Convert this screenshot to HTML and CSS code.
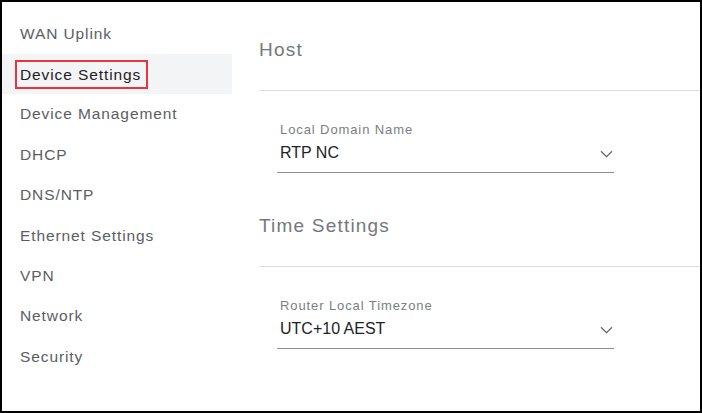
FILE: index.html
```html
<!DOCTYPE html>
<html lang="en">
<head>
<meta charset="utf-8">
<title>Device Settings</title>
<link rel="stylesheet" href="styles.css">
</head>
<body>
<div class="frame">
  <nav class="sidebar">
    <div class="nav-item">WAN Uplink</div>
    <div class="nav-item active"><span class="outline">Device Settings</span></div>
    <div class="nav-item">Device Management</div>
    <div class="nav-item">DHCP</div>
    <div class="nav-item">DNS/NTP</div>
    <div class="nav-item">Ethernet Settings</div>
    <div class="nav-item">VPN</div>
    <div class="nav-item">Network</div>
    <div class="nav-item">Security</div>
  </nav>
  <main class="content">
    <section class="section">
      <h2 class="section-title">Host</h2>
      <div class="divider"></div>
      <div class="field">
        <div class="field-label">Local Domain Name</div>
        <div class="select">
          <span class="select-value">RTP NC</span>
          <svg class="chevron" width="13" height="8" viewBox="0 0 13 8"><path d="M1 1.2 L6.5 6.6 L12 1.2" fill="none" stroke="#5f6368" stroke-width="1.2"/></svg>
        </div>
      </div>
    </section>
    <section class="section">
      <h2 class="section-title">Time Settings</h2>
      <div class="divider"></div>
      <div class="field">
        <div class="field-label">Router Local Timezone</div>
        <div class="select">
          <span class="select-value">UTC+10 AEST</span>
          <svg class="chevron" width="13" height="8" viewBox="0 0 13 8"><path d="M1 1.2 L6.5 6.6 L12 1.2" fill="none" stroke="#5f6368" stroke-width="1.2"/></svg>
        </div>
      </div>
    </section>
  </main>
</div>
</body>
</html>
```

FILE: styles.css
```css
html, body {
  margin: 0;
  padding: 0;
  background: #ffffff;
}
body {
  font-family: "Liberation Sans", Arial, sans-serif;
}
.frame {
  box-sizing: border-box;
  width: 702px;
  height: 413px;
  border: 2px solid #000000;
  display: flex;
  overflow: hidden;
  background: #ffffff;
}
.sidebar {
  width: 230px;
  flex: 0 0 230px;
  padding-top: 11.5px;
  display: flex;
  flex-direction: column;
}
.nav-item {
  height: 40.4px;
  display: flex;
  align-items: center;
  padding-left: 18px;
  font-size: 15.5px;
  letter-spacing: 0.9px;
  color: #5a5e63;
}
.nav-item.active {
  background: #f3f4f6;
  color: #1e2124;
  padding-left: 13px;
}
.outline {
  display: inline-block;
  border: 2px solid #e8343f;
  padding: 2px 5px 2px 3px;
  line-height: 21px;
}
.content {
  flex: 1;
  padding-top: 36px;
  padding-left: 27px;
}
.section {
  display: flex;
  flex-direction: column;
}
.section + .section {
  margin-top: 41px;
}
.section-title {
  margin: 0;
  font-size: 19px;
  line-height: 24px;
  font-weight: normal;
  letter-spacing: 1.2px;
  color: #74787d;
}
.divider {
  height: 1px;
  background: #dedfe0;
  margin-top: 28px;
}
.field {
  margin-top: 31px;
  margin-left: 18px;
  width: 337px;
}
.field-label {
  padding-left: 3px;
  font-size: 13px;
  line-height: 16px;
  letter-spacing: 0.9px;
  color: #7a7e83;
}
.select {
  margin-top: 5px;
  padding: 0 1px 9px 3px;
  border-bottom: 1px solid #8c9095;
  display: flex;
  align-items: center;
  justify-content: space-between;
}
.select-value {
  font-size: 16px;
  line-height: 20px;
  color: #202326;
}
.chevron {
  display: block;
  margin-top: 1px;
}
```
